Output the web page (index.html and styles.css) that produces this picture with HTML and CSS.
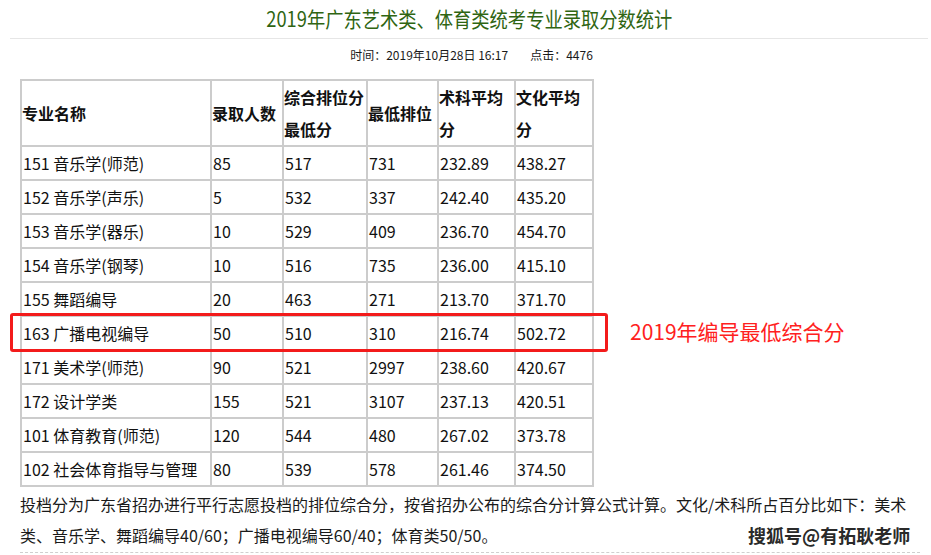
FILE: index.html
```html
<!DOCTYPE html>
<html lang="zh-CN">
<head>
<meta charset="utf-8">
<title>2019年广东艺术类、体育类统考专业录取分数统计</title>
<link rel="stylesheet" href="styles.css">
</head>
<body>
<div class="page">
  <h1 class="title"><span class="title-text">2019年广东艺术类、体育类统考专业录取分数统计</span></h1>
  <div class="meta"><span class="meta-text">时间：2019年10月28日 16:17<span class="gap"></span>点击：4476</span></div>
  <div class="content">
    <table class="scores">
      <colgroup>
        <col class="c1"><col class="c2"><col class="c3"><col class="c4"><col class="c5"><col class="c6">
      </colgroup>
      <thead>
        <tr><th>专业名称</th><th>录取人数</th><th>综合排位分最低分</th><th>最低排位</th><th>术科平均分</th><th>文化平均分</th></tr>
      </thead>
      <tbody>
        <tr><td>151 音乐学(师范)</td><td>85</td><td>517</td><td>731</td><td>232.89</td><td>438.27</td></tr>
        <tr><td>152 音乐学(声乐)</td><td>5</td><td>532</td><td>337</td><td>242.40</td><td>435.20</td></tr>
        <tr><td>153 音乐学(器乐)</td><td>10</td><td>529</td><td>409</td><td>236.70</td><td>454.70</td></tr>
        <tr><td>154 音乐学(钢琴)</td><td>10</td><td>516</td><td>735</td><td>236.00</td><td>415.10</td></tr>
        <tr><td>155 舞蹈编导</td><td>20</td><td>463</td><td>271</td><td>213.70</td><td>371.70</td></tr>
        <tr><td>163 广播电视编导</td><td>50</td><td>510</td><td>310</td><td>216.74</td><td>502.72</td></tr>
        <tr><td>171 美术学(师范)</td><td>90</td><td>521</td><td>2997</td><td>238.60</td><td>420.67</td></tr>
        <tr><td>172 设计学类</td><td>155</td><td>521</td><td>3107</td><td>237.13</td><td>420.51</td></tr>
        <tr><td>101 体育教育(师范)</td><td>120</td><td>544</td><td>480</td><td>267.02</td><td>373.78</td></tr>
        <tr><td>102 社会体育指导与管理</td><td>80</td><td>539</td><td>578</td><td>261.46</td><td>374.50</td></tr>
      </tbody>
    </table>
    <p class="note">投档分为广东省招办进行平行志愿投档的排位综合分，按省招办公布的综合分计算公式计算。文化/术科所占百分比如下：美术类、音乐学、舞蹈编导40/60；广播电视编导60/40；体育类50/50。</p>
  </div>
  <div class="highlight-box"></div>
  <div class="highlight-label">2019年编导最低综合分</div>
  <div class="watermark">搜狐号@有拓耿老师</div>
</div>
</body>
</html>
```

FILE: styles.css
```css
html, body {
  margin: 0;
  padding: 0;
  background: #ffffff;
}

body {
  font-family: "Noto Sans CJK SC", "Noto Sans", sans-serif;
  color: #111111;
}

.page {
  position: relative;
  width: 931px;
  height: 555px;
  overflow: hidden;
}

.title {
  margin: 0 3px 0 10px;
  height: 39px;
  box-sizing: border-box;
  border-bottom: 1px solid #e6e6e6;
  text-align: center;
  font-size: 21px;
  font-weight: 400;
  line-height: 36px;
  color: #2f6512;
}

.title-text {
  display: inline-block;
  transform: scaleX(0.87);
  transform-origin: center;
  white-space: nowrap;
}

.meta {
  height: 40px;
  line-height: 31px;
  text-align: center;
  font-size: 12px;
  color: #1a1a1a;
  padding-left: 12px;
}

.meta-text {
  display: inline-block;
  white-space: nowrap;
}

.gap {
  display: inline-block;
  width: 22px;
}

.content {
  padding-left: 20px;
  width: 900px;
}

.scores {
  border-collapse: collapse;
  table-layout: fixed;
  width: 572px;
  font-size: 16px;
  border: 2px solid #cccccc;
}

.c1 { width: 190px; }
.c2 { width: 72px; }
.c3 { width: 84px; }
.c4 { width: 71px; }
.c5 { width: 77px; }
.c6 { width: 78px; }

.scores th,
.scores td {
  border: 2px solid #cccccc;
  padding: 0 0 0 1px;
  text-align: left;
  vertical-align: middle;
}

.scores th {
  font-weight: 700;
  line-height: 32px;
  height: 64px;
  padding: 0;
}

.scores td {
  line-height: 32px;
  height: 32px;
  white-space: nowrap;
}

.note {
  margin: 2px 0 0 0;
  font-size: 16px;
  line-height: 31px;
  color: #1a1a1a;
  padding-bottom: 1px;
  border-bottom: 1px dashed #cfcfcf;
}

.highlight-box {
  position: absolute;
  left: 10px;
  top: 313px;
  width: 592px;
  height: 33px;
  border: 3px solid #f31b1b;
  border-radius: 3px;
}

.highlight-label {
  position: absolute;
  left: 630px;
  top: 315px;
  font-size: 21px;
  line-height: 32px;
  color: #ff2020;
  white-space: nowrap;
}

.watermark {
  position: absolute;
  left: 748px;
  top: 521px;
  font-size: 18px;
  line-height: 28px;
  font-weight: 700;
  color: #2a2a2a;
  white-space: nowrap;
  text-shadow: 1px 0 0 #fff, -1px 0 0 #fff, 0 1px 0 #fff, 0 -1px 0 #fff;
}
```
